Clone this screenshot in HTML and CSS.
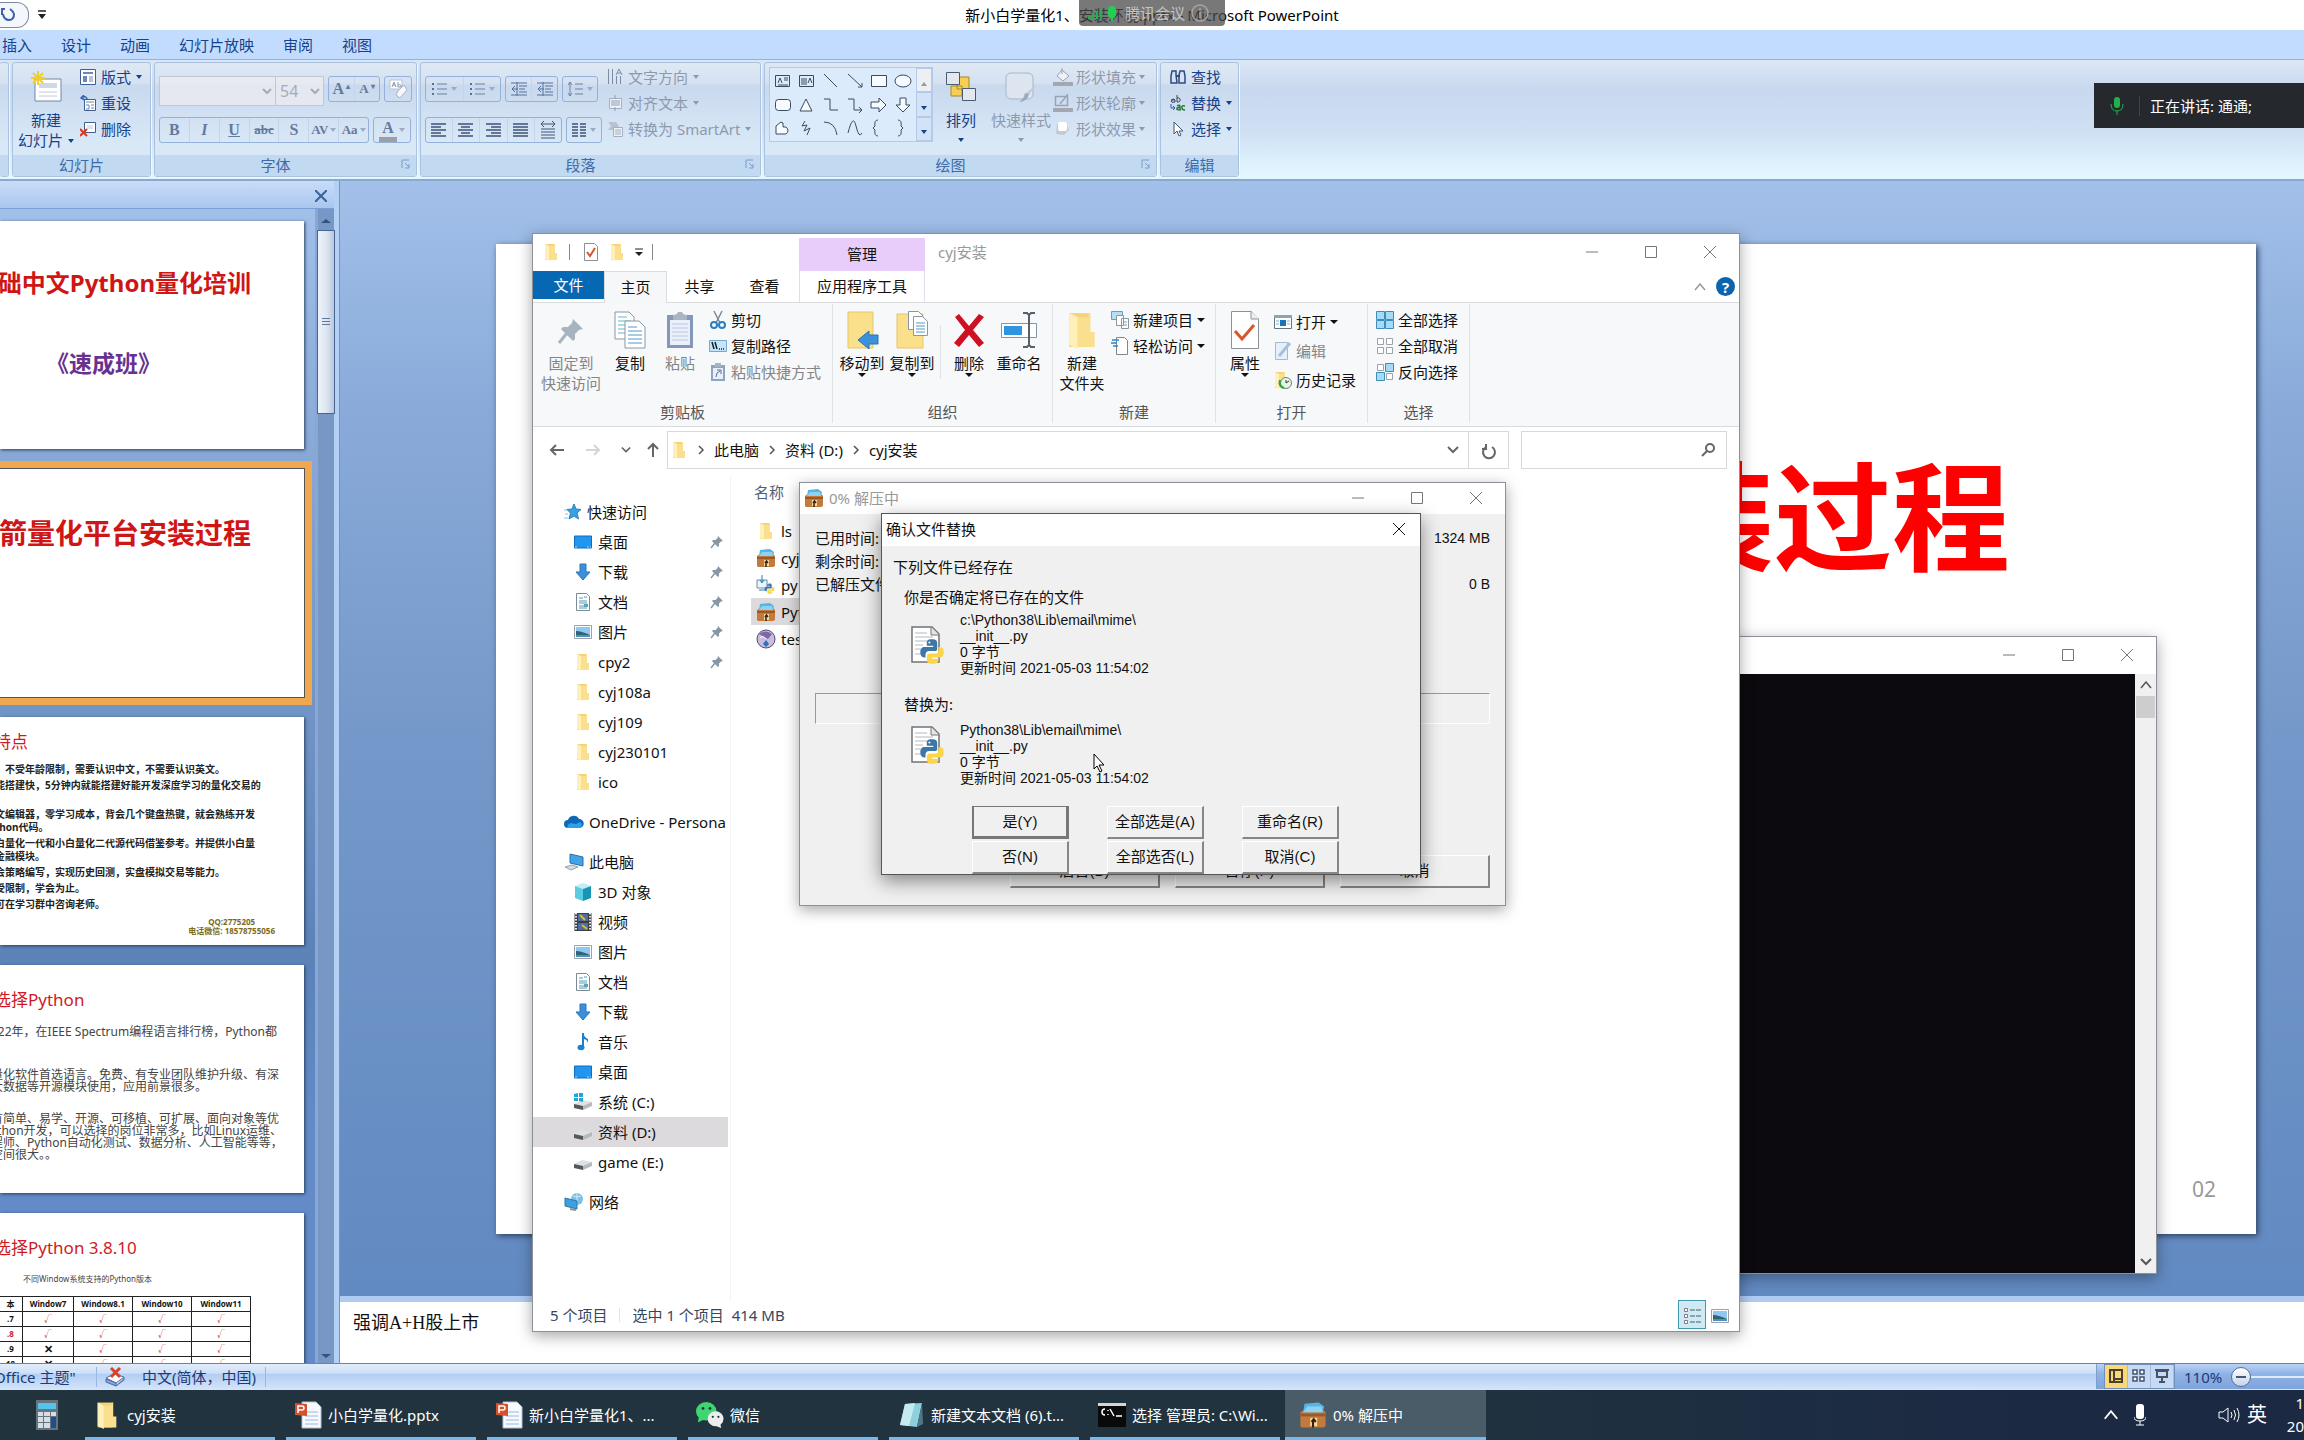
FILE: index.html
```
<!DOCTYPE html>
<html lang="zh-CN">
<head>
    <meta charset="UTF-8">
    <meta name="viewport" content="width=device-width, initial-scale=1.0">
    <title>Microsoft PowerPoint</title>
    <link rel="stylesheet" href="styles.css">
</head>
<body>
    <!-- Icon definitions -->
    <svg class="defs" aria-hidden="true">
        <symbol id="folder" viewBox="0 0 18 18"><path d="M3 1h9.500v16H3z" fill="#f3d37b"/><path d="M3 1l4 2v15l-4-2z" fill="#fff0b8"/><path d="M7 3h5V1h1v9h2v7H7z" fill="#f9df8e"/></symbol>
        <symbol id="archive" viewBox="0 0 20 20"><path d="M1 8l3-2h13l2 2v10l-2 1H2l-1-1z" fill="#c47a3c"/><path d="M1 9h18v2H1z" fill="#9a5a28"/><path d="M4 2l10-1 4 3-1 4H3z" fill="#56b4e6"/><path d="M3 8l3-4h10l1 4z" fill="#8fd1f2"/><path d="M8 12h5v6H8z" fill="#f6d9a0"/><path d="M10 19v-5M9 15l1.500-2 1.500 2" stroke="#3b1f0c" stroke-width="1.500" fill="none"/></symbol>
        <symbol id="python" viewBox="0 0 20 20"><path d="M10 1c-4 0-4 1.500-4 3v2h5v1H4c-2 0-3 2-3 4s1 4 3 4h1v-2c0-2 1-3 3-3h4c2 0 2-1 2-2V4c0-2-1-3-4-3z" fill="#3d76a8"/><path d="M15 7v2c0 2-1 3-3 3H8c-1 0-2 1-2 2v3c0 1.500 1 3 4 3s5-1 5-3v-1h-5v-1h6c2 0 3-1 3-4s-1-4-4-4z" fill="#fbd64a"/><circle cx="8" cy="3.500" r=".8" fill="#fff"/></symbol>
        <symbol id="pyinstall" viewBox="0 0 20 20"><path d="M1 5h10v8H1z" fill="#eaf4fb" stroke="#6f8ea5"/><path d="M6 0v7M4 5l2 3 2-3M3 15h7" stroke="#2c7fb8" fill="none"/><use href="#python" x="8" y="8" width="11" height="11"/></symbol>
        <symbol id="tes" viewBox="0 0 20 20"><circle cx="10" cy="10" r="9" fill="#c8bddf" stroke="#4c4a78"/><path d="M3 5q7-5 13 0l-4 5z" fill="#7c6aa5"/><path d="M10 11l3 4-3 3-3-3z" fill="#3470b8"/><path d="M4 9q3-3 6 1" stroke="#fff" fill="none"/></symbol>
        <symbol id="star" viewBox="0 0 18 18"><path d="M10 1l2 5 5 .5-4 3.500 1.500 6L10 13l-5 3 1.500-6L3 6.500 8 6z" fill="#36a3e0" stroke="#2880be"/><path d="M0 7h3M1 11h3M0 15h4" stroke="#77c4ee"/></symbol>
        <symbol id="desktop" viewBox="0 0 18 18"><path d="M.5 3h17v12H.5z" fill="#2196ee" stroke="#0d6fc0"/><path d="M1 14h16" stroke="#a6dbff" stroke-dasharray="2 10 2 1"/></symbol>
        <symbol id="download" viewBox="0 0 18 18"><path d="M6 1h6v8h4l-7 8-7-8h4z" fill="#3c8fdc" stroke="#2d74b8"/></symbol>
        <symbol id="doc" viewBox="0 0 18 18"><path d="M2.500.5h10l3 3v14h-13z" fill="#fff" stroke="#7b8a94"/><path d="M5 5h4M10 4h3M5 8h8M5 10h8M5 13h5M5 15h8" stroke="#4e9bb5"/><path d="M10 11h4v3h-4z" fill="#5aa4c0"/></symbol>
        <symbol id="picture" viewBox="0 0 18 18"><path d="M.5 2.500h17v13H.5z" fill="#fff" stroke="#9aa2a8"/><path d="M2 4h14v10H2z" fill="#90c8f2"/><path d="M2 8q5 0 14 4v2H2z" fill="#2f6474"/><path d="M2 12h14v2H2z" fill="#4f8fc6"/></symbol>
        <symbol id="onedrive" viewBox="0 0 20 14"><path d="M4 13a4 4 0 010-8 6 6 0 0111-1 4.500 4.500 0 01.5 9z" fill="#0f67b8"/><path d="M3 13q0-3 3-5l6 1 4-2a4 3.500 0 010 6z" fill="#2aa0ea"/></symbol>
        <symbol id="pc" viewBox="0 0 20 18"><path d="M6 1l13 3v9L6 10z" fill="#3fa5e8" stroke="#2f6ea5"/><path d="M1 14l7-2 6 2-7 3z" fill="#d8dbde" stroke="#9ba1a6"/></symbol>
        <symbol id="cube" viewBox="0 0 18 18"><path d="M9 0l8 3-8 3-8-3z" fill="#bdeef6"/><path d="M1 3l8 3v12l-8-3z" fill="#5bcbe0"/><path d="M17 3L9 6v12l8-3z" fill="#1695b5"/></symbol>
        <symbol id="video" viewBox="0 0 18 18"><path d="M.5 0h17v18H.5z" fill="#3b3f44"/><path d="M2 0v18M16 0v18" stroke="#e8e8e8" stroke-width="2" stroke-dasharray="1.500 1.500"/><path d="M4 1h10v7H4zM4 10h10v7H4z" fill="#4a6fa8"/><path d="M6 2l5 5M8 12l5 4" stroke="#e2b63c" stroke-width="2"/></symbol>
        <symbol id="music" viewBox="0 0 18 18"><path d="M9 0v13" stroke="#1d80d0" stroke-width="2"/><path d="M9 0q1 4 5 6v4q-1-4-5-4z" fill="#1d80d0"/><ellipse cx="7" cy="14.500" rx="3.500" ry="2.800" fill="#1d80d0"/></symbol>
        <symbol id="drive" viewBox="0 0 18 18"><path d="M0 11l8-4 10 2-9 5z" fill="#dfe1e3"/><path d="M0 11l9 2v4l-9-2z" fill="#55585b"/><path d="M9 13l9-4v4l-9 4z" fill="#b7babd"/></symbol>
        <symbol id="drivec" viewBox="0 0 18 18"><use href="#drive"/><path d="M0 1l4-1v4H0zM5 0l4-1v5H5zM0 5h4v3H0zM5 5h4v4L5 8z" fill="#21a5d8"/></symbol>
        <symbol id="network" viewBox="0 0 20 18"><circle cx="13" cy="6" r="6" fill="#7cc0e6"/><path d="M9 3q4 2 8 0M13 0v12" stroke="#cfeaf8" fill="none"/><path d="M1 5l12 3v8L1 13z" fill="#3c9fe0" stroke="#2f74aa"/><path d="M6 16l6 1" stroke="#8d9499" stroke-width="2"/></symbol>
        <symbol id="pin" viewBox="0 0 14 14"><path d="M8 1l5 5-2 .5-2 2V11l-1 1-6-6 1-1h2.500l2-2z" fill="#8797a5"/><path d="M5 8l-4 5" stroke="#8797a5" stroke-width="1.500"/></symbol>
        <symbol id="pyfile" viewBox="0 0 34 38"><path d="M1 1h20l7 7v28H1z" fill="#fff" stroke="#707478" stroke-width="1.500"/><path d="M20 1v8h8" fill="#e6e6e6" stroke="#707478"/><path d="M4 7h12M4 11h18M4 15h12M4 19h8M4 23h6M4 28h6" stroke="#b4bac0"/><use href="#python" x="8" y="12" width="26" height="26"/></symbol>
        <symbol id="ppt" viewBox="0 0 28 30"><path d="M8 2h14l5 5v21H8z" fill="#f6f9fd" stroke="#b4bfd0"/><path d="M11 12h13M11 16h13M11 20h13M11 24h13" stroke="#9db8e2"/><path d="M1 3l12 1v12L1 15z" fill="#d6502c"/><path d="M4 13V6h4q2 0 2 2t-2 2H4" stroke="#fff" stroke-width="1.500" fill="none"/></symbol>
        <symbol id="wechat" viewBox="0 0 30 28"><ellipse cx="11" cy="10" rx="11" ry="10" fill="#3fd672"/><path d="M3 16l-1 6 6-3z" fill="#3fd672"/><ellipse cx="21" cy="18" rx="8.500" ry="8" fill="#ededed"/><path d="M26 23l1 5-5-2z" fill="#ededed"/><g fill="#21343e"><circle cx="7.500" cy="7" r="1.500"/><circle cx="15" cy="7" r="1.500"/><circle cx="18" cy="16" r="1.200"/><circle cx="24" cy="16" r="1.200"/></g></symbol>
        <symbol id="notepad" viewBox="0 0 28 28"><path d="M8 3l17-1-5 24-17-2z" fill="#8ed0dc"/><path d="M8 3l10-1-6 23-9-1z" fill="#c5eaf0"/><path d="M25 2l1 21-6 3z" fill="#4f7883"/></symbol>
        <symbol id="terminal" viewBox="0 0 28 24"><path d="M0 0h28v24H0z" fill="#0a0a0a"/><path d="M0 0h28v3H0z" fill="#d5d5d5"/><path d="M7 6q-3 0-3 3t3 3M10 7v1M10 11v1M12 6l4 7M18 13h6" stroke="#fff" stroke-width="1.500" fill="none"/></symbol>
        <symbol id="minimize" viewBox="0 0 12 12"><path d="M0 6h12" stroke="currentColor"/></symbol>
        <symbol id="maximize" viewBox="0 0 12 12"><path d="M.5.5h11v11H.5z" fill="none" stroke="currentColor"/></symbol>
        <symbol id="close" viewBox="0 0 12 12"><path d="M0 0l12 12M12 0L0 12" stroke="currentColor"/></symbol>
        <symbol id="chev-r" viewBox="0 0 8 10"><path d="M2 1l4 4-4 4" fill="none" stroke="#555" stroke-width="1.500"/></symbol>
        <symbol id="chev-d" viewBox="0 0 12 8"><path d="M1 1l5 5 5-5" fill="none" stroke="currentColor" stroke-width="2"/></symbol>
        <symbol id="chev-u" viewBox="0 0 12 8"><path d="M1 7l5-6 5 6" fill="none" stroke="currentColor" stroke-width="1.500"/></symbol>
        <symbol id="bullets" viewBox="0 0 16 16"><path d="M1 2h2v2H1zM1 7h2v2H1zM1 12h2v2H1z" fill="#52719d"/><path d="M6 3h10M6 8h10M6 13h10" stroke="#6d819f"/></symbol>
        <symbol id="al-l" viewBox="0 0 16 14"><path d="M0 1h15M0 4h10M0 7h15M0 10h10M0 13h15" stroke="#3f5377" stroke-width="1.500"/></symbol>
        <symbol id="al-c" viewBox="0 0 16 14"><path d="M0 1h15M3 4h9M0 7h15M3 10h9M0 13h15" stroke="#3f5377" stroke-width="1.500"/></symbol>
        <symbol id="al-r" viewBox="0 0 16 14"><path d="M0 1h15M5 4h10M0 7h15M5 10h10M0 13h15" stroke="#3f5377" stroke-width="1.500"/></symbol>
        <symbol id="al-j" viewBox="0 0 16 14"><path d="M0 1h15M0 4h15M0 7h15M0 10h15M0 13h15" stroke="#3f5377" stroke-width="1.500"/></symbol>
        <symbol id="indent" viewBox="0 0 16 14"><path d="M0 1h16M8 4h8M8 7h6M8 10h8M0 13h16M7 7H1M4 4L1 7l3 3M6 0v14" stroke="#52719d" fill="none"/></symbol>
        <symbol id="launcher" viewBox="0 0 10 10"><path d="M1 9V1h7M4 4l4 4M8 5v4H4" stroke="#7f9cc6" fill="none"/></symbol>
        <symbol id="copypages" viewBox="0 0 32 38"><path d="M1 1h14l5 5v22H1z" fill="#fff" stroke="#8a97a0"/><path d="M4 6h9M4 10h13M4 14h13M4 18h13M4 22h13" stroke="#66b2d6"/><path d="M11 10h14l6 6v21H11z" fill="#fff" stroke="#8a97a0"/><path d="M14 16h9M14 20h14M14 24h14M14 28h14M14 32h14" stroke="#5298c8"/></symbol>
    </svg>

    <div class="app">
        <header class="titlebar">
            <div class="quick-undo"><svg width="14" height="14" viewBox="0 0 14 14"><path d="M4 1H1v6M2 6q1 6 6 6t5-6q-1-3-4-5" fill="none" stroke="#3c5fae" stroke-width="2"/></svg></div>
            <svg width="8" height="10" viewBox="0 0 8 10"><path d="M0 1h8" stroke="#222" stroke-width="1.500"/><path d="M0 4h8L4 9z" fill="#222"/></svg>
            <h1 class="doc-title">新小白学量化1、安装环境.pptx - Microsoft PowerPoint</h1>
        </header>

        <nav class="ppt-tabs">
            <button>插入</button><button>设计</button><button>动画</button><button>幻灯片放映</button><button>审阅</button><button>视图</button>
        </nav>

        <div class="ribbon">
            <section class="group group-cut"><div class="group-body"></div><div class="group-label"></div></section>

            <section class="group group-slides">
                <div class="group-body">
                    <button class="tall">
                        <svg width="32" height="32" viewBox="0 0 32 32"><path d="M5 8h26v22H5z" fill="#fff" stroke="#7386a3"/><path d="M9 12h18v5H9z" fill="#cfd8e6"/><path d="M9 21h18M9 25h18" stroke="#c0c9d8"/><path d="M8 0v14M1 7h14M3 2l10 10M13 2L3 12" stroke="#f0cf2a" stroke-width="2"/></svg>
                        <span>新建</span><span class="line">幻灯片<i class="arrow"></i></span>
                    </button>
                    <div class="stack">
                        <button><svg width="16" height="16" viewBox="0 0 16 16"><path d="M.5.5h15v15H.5z" fill="#fff" stroke="#3f5f93"/><path d="M3 3h10v2H3zM3 7h4v6H3z" fill="#6d88b5"/><path d="M9 8h4M9 10h4M9 12h4" stroke="#6d88b5"/></svg>版式<i class="arrow"></i></button>
                        <button><svg width="16" height="16" viewBox="0 0 16 16"><path d="M4.500 4.500h11v11h-11z" fill="#fff" stroke="#3f5f93"/><path d="M6 7h8M6 10h3v4H6M11 10h3M11 13h3" stroke="#6d88b5" fill="none"/><path d="M7 5Q7 1 3 2M4 0L1 3l4 2" stroke="#2d5cae" stroke-width="1.500" fill="none"/></svg>重设</button>
                        <button><svg width="16" height="16" viewBox="0 0 16 16"><path d="M4.500 1.500h11v10h-11z" fill="#fff" stroke="#3f5f93"/><path d="M7 4h6v4H7z" fill="#dbe3f0"/><path d="M0 8l7 7M7 8l-7 7" stroke="#d83a20" stroke-width="2"/></svg>删除</button>
                    </div>
                </div>
                <div class="group-label">幻灯片</div>
            </section>

            <section class="group group-font">
                <div class="group-body rows">
                    <div class="tool-row">
                        <div class="combo-pair"><select aria-label="字体" disabled><option></option></select><select aria-label="字号" disabled><option>54</option></select></div>
                        <div class="box two"><button class="serif" disabled>A<sup>▴</sup></button><button class="serif small" disabled>A<sup>▾</sup></button></div>
                        <div class="box one"><button disabled aria-label="清除格式"><svg width="18" height="20" viewBox="0 0 18 20"><path d="M1 1h12v9H1z" fill="#fff" stroke="#b9c3d2"/><path d="M3 8l2-5 2 5M4 6h2M9 8V3M9 6q4-1 3 2H9" stroke="#8898b0" fill="none"/><path d="M9 12l6-6 3 5-7 8-4-3z" fill="#f6f8fb" stroke="#a7b1c0"/></svg></button></div>
                    </div>
                    <div class="tool-row">
                        <div class="box seven"><button class="serif" disabled><b>B</b></button><button class="serif" disabled><i>I</i></button><button class="serif" disabled><u>U</u></button><button class="serif small" disabled><s>abc</s></button><button class="serif" disabled><b>S</b></button><button class="serif small" disabled>AV<i class="arrow"></i></button><button class="serif small" disabled>Aa<i class="arrow"></i></button></div>
                        <div class="box color"><button class="serif font-color" disabled><span>A</span><i class="arrow"></i></button></div>
                    </div>
                </div>
                <div class="group-label with-launcher">字体<svg class="launcher" width="10" height="10"><use href="#launcher"/></svg></div>
            </section>

            <section class="group group-para">
                <div class="group-body">
                    <div class="rows">
                        <div class="tool-row">
                            <div class="box p1"><button disabled aria-label="项目符号"><svg width="16" height="16"><use href="#bullets"/></svg><i class="arrow"></i></button><button disabled aria-label="编号"><svg width="16" height="16"><use href="#bullets"/></svg><i class="arrow"></i></button></div>
                            <div class="box p2"><button disabled aria-label="减少缩进"><svg width="16" height="14"><use href="#indent"/></svg></button><button disabled aria-label="增加缩进"><svg width="16" height="14"><use href="#indent"/></svg></button></div>
                            <div class="box p3"><button disabled aria-label="行距"><svg width="16" height="16" viewBox="0 0 16 16"><path d="M3 1v14M1 4l2-3 2 3M1 12l2 3 2-3M8 3h8M8 8h8M8 13h8" stroke="#6d819f" fill="none"/></svg><i class="arrow"></i></button></div>
                        </div>
                        <div class="tool-row">
                            <div class="box p4">
                                <button disabled aria-label="左对齐"><svg width="16" height="14"><use href="#al-l"/></svg></button><button disabled aria-label="居中"><svg width="16" height="14"><use href="#al-c"/></svg></button><button disabled aria-label="右对齐"><svg width="16" height="14"><use href="#al-r"/></svg></button><button disabled aria-label="两端对齐"><svg width="16" height="14"><use href="#al-j"/></svg></button><button disabled aria-label="分散对齐"><svg width="16" height="18" viewBox="0 0 16 18"><path d="M1 3h14M4 0L1 3l3 3M12 0l3 3-3 3M1 8h14M1 11h14M1 14h14M1 17h14" stroke="#3f5377" fill="none"/></svg></button>
                            </div>
                            <div class="box p3"><button disabled aria-label="分栏"><svg width="14" height="14" viewBox="0 0 14 14"><path d="M0 1h6M0 4h6M0 7h6M0 10h6M0 13h6M8 1h6M8 4h6M8 7h6M8 10h6M8 13h6" stroke="#3f5377" stroke-width="1.500"/></svg><i class="arrow"></i></button></div>
                        </div>
                    </div>
                    <div class="stack off">
                        <button disabled><svg width="16" height="16" viewBox="0 0 16 16"><path d="M1.500 0v15M5.500 0v15M9.500 7v8M13.500 7v8M9 6l3-6 3 6M10 4h4" stroke="#7d8ca5" fill="none"/></svg>文字方向<i class="arrow"></i></button>
                        <button disabled><svg width="16" height="16" viewBox="0 0 16 16"><path d="M2.500 3.500h12v10h-12z" fill="#eef2f8" stroke="#a3afc2"/><path d="M4 6h9M4 8h9M4 10h9M8 0v4M8 12v4" stroke="#8f9db3"/></svg>对齐文本<i class="arrow"></i></button>
                        <button disabled><svg width="16" height="16" viewBox="0 0 16 16"><path d="M1 1h8l3 4-3 4H1l3-4z" fill="#b9c1cd"/><path d="M6.500 6.500h9v9h-9z" fill="#eef2f8" stroke="#a3afc2"/><path d="M8 9h6M8 11h6M8 13h6" stroke="#a3afc2"/></svg>转换为 SmartArt<i class="arrow"></i></button>
                    </div>
                </div>
                <div class="group-label with-launcher">段落<svg class="launcher" width="10" height="10"><use href="#launcher"/></svg></div>
            </section>

            <section class="group group-draw">
                <div class="group-body">
                    <div class="gallery">
                        <svg class="shapes" viewBox="0 0 146 74" width="146" height="74" fill="none" stroke="#3c4a60">
                            <path d="M5.500 7.500h14v11h-14zM8 15l2-5 2 5M14 10h4M14 12h4M8 17h10M29.500 7.500h14v11h-14zM32 10v7M34 10v7M36 10v7M38 15l2-5 2 5" fill="none"/>
                            <path d="M54 6l13 13M78 6l14 13M92 15v4h-4" />
                            <path d="M101.500 7.500h15v11h-15z" fill="#f6fbff"/><ellipse cx="133" cy="13" rx="8" ry="6" fill="#f6fbff"/>
                            <rect x="5.500" y="31.500" width="15" height="11" rx="3" fill="#f6fbff"/><path d="M30 43l6-12 6 12z" fill="#f6fbff"/>
                            <path d="M54 31h6v11h8M78 31h6v11h8M89 39l3 3-3 3"/>
                            <path d="M101 34h8v-4l7 7-7 7v-4h-8zM130 30v7h-4l7 7 7-7h-4v-7z" fill="#f6fbff"/>
                            <path d="M6 66v-8l5-4 2 1v4h3q4 4 0 7z" fill="#f6fbff"/><path d="M35 53l-3 5 5-1-3 6 6-3-3 7M54 54q11 0 13 13M78 65q5-20 8-7t6 7M108 52q-4 0-3 6l-2 2 2 2q-1 6 3 6M128 52q4 0 3 6l2 2-2 2q1 6-3 6"/>
                        </svg>
                        <div class="gallery-scroll"><button disabled aria-label="上"><i class="arrow up"></i></button><button aria-label="下"><i class="arrow"></i></button><button aria-label="更多"><i class="arrow more"></i></button></div>
                    </div>
                    <button class="tall"><svg width="32" height="32" viewBox="0 0 32 32"><path d="M12 6h12v12H12zM6 15h11v10H6z" fill="#f7cf55" stroke="#a8862f"/><path d="M1.500 1.500h13v12h-13zM17.500 17.500h13v12h-13z" fill="#e3e8ef" stroke="#4a5a72"/></svg><span>排列</span><i class="arrow"></i></button>
                    <button class="tall quick-style" disabled><svg width="32" height="32" viewBox="0 0 32 32"><rect x="1" y="2" width="27" height="26" rx="5" fill="#dde5f0" stroke="#a9b6c9"/><path d="M31 14l-7 10-3-2z" fill="#c5cbd6"/><path d="M24 23q-1 7-10 8 5-3 6-9z" fill="#9ea8b8"/></svg><span>快速样式</span><i class="arrow"></i></button>
                    <div class="stack off tight">
                        <button disabled><svg width="20" height="18" viewBox="0 0 20 18"><path d="M9 2l7 6-6 5-6-5zM9 0v6" fill="#eef2f8" stroke="#98a3b5"/><path d="M0 14h20v4H0z" fill="#a3a8b0"/></svg>形状填充<i class="arrow"></i></button>
                        <button disabled><svg width="20" height="18" viewBox="0 0 20 18"><path d="M2.500 2.500h12v9h-12zM15 0L7 10" fill="none" stroke="#98a3b5" stroke-width="1.500"/><path d="M0 14h20v4H0z" fill="#a3a8b0"/></svg>形状轮廓<i class="arrow"></i></button>
                        <button disabled><svg width="20" height="18" viewBox="0 0 20 18"><path d="M4 4l9-2 3 8-5 5-8-1z" fill="#c3cad6"/><rect x="5" y="2" width="9" height="9" rx="2" fill="#fff"/></svg>形状效果<i class="arrow"></i></button>
                    </div>
                </div>
                <div class="group-label with-launcher">绘图<svg class="launcher" width="10" height="10"><use href="#launcher"/></svg></div>
            </section>

            <section class="group group-edit">
                <div class="group-body">
                    <div class="stack">
                        <button><svg width="16" height="14" viewBox="0 0 16 14"><path d="M2 1h4v4l1 8H1V6zM10 1h4l1 5v7H9V5z" fill="#d6e3f5" stroke="#2c4a82" stroke-width="1.500"/><path d="M6 6h4" stroke="#2c4a82" stroke-width="2"/></svg>查找</button>
                        <button><svg width="16" height="16" viewBox="0 0 16 16"><path d="M1 5q3-2 4 0v2q-4 1-4-1 2-2 4-1M7 0v7q4 0 3-3-1-2-3-1" stroke="#3d4450" fill="none"/><path d="M1 9v4h4M3 11l2 2-2 2" stroke="#2d5cae" fill="none"/><path d="M7 11q3-2 3 1v3q-4 0-3-2l3-1M15 11q-4-1-3 2 0 2 3 2" stroke="#237a2c" stroke-width="1.500" fill="none"/></svg>替换<i class="arrow"></i></button>
                        <button><svg width="16" height="16" viewBox="0 0 16 16"><path d="M4 1v12l3-3 2 5 2-1-2-4h4z" fill="#fff" stroke="#47566e"/></svg>选择<i class="arrow"></i></button>
                    </div>
                </div>
                <div class="group-label">编辑</div>
            </section>
        </div>

        <main class="workspace">
            <aside class="slides-panel">
                <div class="panel-head"><button aria-label="关闭"><svg width="12" height="12"><use href="#close"/></svg></button></div>
                <div class="panel-body">
                    <div class="thumbs">
                        <article class="thumb cover">
                            <h2>础中文Python量化培训</h2>
                            <h3>《速成班》</h3>
                        </article>
                        <article class="thumb cover selected">
                            <h2 class="large">箭量化平台安装过程</h2>
                        </article>
                        <article class="thumb text kai">
                            <h2>特点</h2>
                            <p>，不受年龄限制，需要认识中文，不需要认识英文。</p>
                            <p>能搭建快，5分钟内就能搭建好能开发深度学习的量化交易的</p>
                            <p class="gap">文编辑器，零学习成本，背会几个键盘热键，就会熟练开发<br>thon代码。</p>
                            <p>白量化一代和小白量化二代源代码借鉴参考。并提供小白量<br>金融模块。</p>
                            <p>会策略编写，实现历史回测，实盘模拟交易等能力。</p>
                            <p>受限制，学会为止。</p>
                            <p>可在学习群中咨询老师。</p>
                            <address>QQ:2775205<br>电话微信: 18578755056</address>
                        </article>
                        <article class="thumb text plain">
                            <h2>选择Python</h2>
                            <p>022年，在IEEE Spectrum编程语言排行榜，Python都</p>
                            <p class="far">量化软件首选语言。免费、有专业团队维护升级、有深<br>大数据等开源模块使用，应用前景很多。</p>
                            <p>有简单、易学、开源、可移植、可扩展、面向对象等优<br>ython开发，可以选择的岗位非常多，比如Linux运维、<br>程师、Python自动化测试、数据分析、人工智能等等，<br>空间很大。。</p>
                        </article>
                        <article class="thumb text versions">
                            <h2>选择Python 3.8.10</h2>
                            <table>
                                <caption>不同Window系统支持的Python版本</caption>
                                <tr><th>本</th><th>Window7</th><th>Window8.1</th><th>Window10</th><th>Window11</th></tr>
                                <tr><th>.7</th><td>√</td><td>√</td><td>√</td><td>√</td></tr>
                                <tr><th class="hot">.8</th><td>√</td><td>√</td><td>√</td><td>√</td></tr>
                                <tr><th>.9</th><td class="no">✕</td><td>√</td><td>√</td><td>√</td></tr>
                                <tr><th>10</th><td class="no">✕</td><td>√</td><td>√</td><td>√</td></tr>
                            </table>
                        </article>
                    </div>
                    <div class="office-scroll"><i class="arrow up"></i><div class="office-thumb"></div><i class="arrow"></i></div>
                </div>
            </aside>
            <div class="editor">
                <div class="canvas">
                    <div class="slide"><h2>装过程</h2><span class="page-no">02</span></div>
                </div>
                <div class="notes">强调A+H股上市</div>
            </div>
        </main>

        <footer class="statusbar">
            <span class="theme">Office 主题"</span>
            <svg width="20" height="20" viewBox="0 0 20 20"><path d="M1 11l8-4 10 3-8 6z" fill="#fff" stroke="#5371a8"/><path d="M1 12v3l10 4v-3zM11 19l8-6v-3" fill="#8ba8d8" stroke="#4a68a3"/><path d="M6 1l9 9M15 1L6 10" stroke="#d8432a" stroke-width="3"/></svg>
            <span class="lang">中文(简体，中国)</span>
            <div class="zoom-area">
                <div class="views">
                    <button class="on" aria-label="普通视图"><svg width="14" height="14" viewBox="0 0 14 14"><path d="M1 1h12v12H1zM5 1v12M5 10h8" fill="none" stroke="#4a4030" stroke-width="2"/></svg></button>
                    <button aria-label="幻灯片浏览"><svg width="14" height="14" viewBox="0 0 14 14"><path d="M1 1h4v4H1zM8 1h4v4H8zM1 8h4v4H1zM8 8h4v4H8z" fill="#fff" stroke="#44536c" stroke-width="1.500"/></svg></button>
                    <button aria-label="幻灯片放映"><svg width="14" height="14" viewBox="0 0 14 14"><path d="M0 1h14M2 2h10v6H2zM7 8v4M4 13h6" fill="none" stroke="#44536c" stroke-width="2"/></svg></button>
                </div>
                <span>110%</span>
                <button class="zoom-out" aria-label="缩小"></button>
                <i class="zoom-line"></i>
            </div>
        </footer>
    </div>

    <!-- Console -->
    <section class="window console">
        <div class="win-title"><div class="win-buttons"><button aria-label="最小化"><svg width="12" height="12"><use href="#minimize"/></svg></button><button aria-label="最大化"><svg width="12" height="12"><use href="#maximize"/></svg></button><button aria-label="关闭"><svg width="12" height="12"><use href="#close"/></svg></button></div></div>
        <div class="console-body"><div class="console-screen"></div><div class="console-scroll"><svg width="12" height="8"><use href="#chev-u"/></svg><i></i><svg width="12" height="8"><use href="#chev-d"/></svg></div></div>
    </section>

    <!-- File explorer -->
    <section class="window explorer">
        <div class="win-title">
            <div class="quick">
                <svg width="18" height="18"><use href="#folder"/></svg><i class="bar"></i>
                <svg width="16" height="18" viewBox="0 0 16 18"><path d="M1.500.5h10l3 3v14h-13z" fill="#fff" stroke="#8a9299"/><path d="M4 9l3 4 5-8" fill="none" stroke="#d3592c" stroke-width="2"/></svg>
                <svg width="18" height="18"><use href="#folder"/></svg>
                <svg width="8" height="8" viewBox="0 0 8 8"><path d="M0 1h8" stroke="#222"/><path d="M0 4h8L4 8z" fill="#222"/></svg><i class="bar"></i>
            </div>
            <div class="context">管理</div>
            <span class="caption">cyj安装</span>
            <div class="win-buttons"><button aria-label="最小化"><svg width="12" height="12"><use href="#minimize"/></svg></button><button aria-label="最大化"><svg width="12" height="12"><use href="#maximize"/></svg></button><button aria-label="关闭"><svg width="12" height="12"><use href="#close"/></svg></button></div>
        </div>
        <nav class="ex-tabs">
            <div class="main-tabs"><button class="file">文件</button><button class="home">主页</button><button>共享</button><button>查看</button></div>
            <button class="tools">应用程序工具</button>
            <div class="tab-right"><svg width="12" height="8"><use href="#chev-u"/></svg><button class="help">?</button></div>
        </nav>
        <div class="ex-ribbon">
            <section class="ex-group clip">
                <div class="ex-tools">
                    <button class="big wide" disabled><svg width="28" height="38" viewBox="0 0 14 19"><use href="#pin" y="3" width="14" height="14" opacity=".7"/></svg>固定到<br>快速访问</button>
                    <button class="big"><svg width="32" height="38"><use href="#copypages"/></svg>复制</button>
                    <button class="big" disabled><svg width="28" height="38" viewBox="0 0 28 38"><path d="M1 4h26v33H1z" fill="#8698ba"/><path d="M4 9h20v25H4z" fill="#eaf0fa"/><path d="M6 13h16M6 17h16M6 21h16M6 25h16M6 29h16" stroke="#b9c8e2"/><path d="M7 4q4 0 5-3h4q1 3 5 3v5H7z" fill="#a9b4c4"/></svg>粘贴</button>
                    <div class="small-list">
                        <button><svg width="18" height="20" viewBox="0 0 18 20"><path d="M5 1l6 12M13 1L7 13" stroke="#7d8b96" stroke-width="1.500"/><circle cx="5" cy="15" r="3" fill="none" stroke="#2b7fc0" stroke-width="2"/><circle cx="13" cy="15" r="3" fill="none" stroke="#2b7fc0" stroke-width="2"/></svg>剪切</button>
                        <button><svg width="18" height="14" viewBox="0 0 18 14"><path d="M.5 1.500h17v11H.5z" fill="#c5e5fa" stroke="#74a9cd"/><path d="M3 3l2 7M6 3l2 7M10 10h1M12 10h1M14 10h1" stroke="#16202a" stroke-width="1.500"/></svg>复制路径</button>
                        <button disabled><svg width="18" height="20" viewBox="0 0 18 20"><path d="M2 3h14v16H2z" fill="#8fa3c4"/><path d="M4 6h10v11H4z" fill="#e8eff9"/><path d="M6 1h6v4H6z" fill="#a9b4c4"/><path d="M7 15q0-5 4-6M8 8h4v4" stroke="#56719c" fill="none"/></svg>粘贴快捷方式</button>
                    </div>
                </div>
                <div class="ex-label">剪贴板</div>
            </section>
            <section class="ex-group org">
                <div class="ex-tools">
                    <button class="big"><svg width="34" height="38" viewBox="0 0 34 38"><path d="M3 1h25v36H3z" fill="#fbe08c" stroke="#e6c667"/><path d="M33 24v9h-9v5L13 29l11-9v4z" fill="#3c92da" stroke="#2674b5"/></svg>移动到<i class="arrow"></i></button>
                    <button class="big"><svg width="34" height="38" viewBox="0 0 34 38"><path d="M2 3h26v34H2z" fill="#fbe08c" stroke="#e6c667"/><path d="M13.500.5h10l4 4v14h-14z" fill="#fff" stroke="#8a97a0"/><path d="M18.500 5.500h9l5 5v14h-14z" fill="#fff" stroke="#8a97a0"/><path d="M21 12h9M21 15h9M21 18h9M21 21h9" stroke="#5298c8"/></svg>复制到<i class="arrow"></i></button>
                    <i class="split"></i>
                    <button class="big"><svg width="32" height="38" viewBox="0 0 32 38"><path d="M2 6l4-3 10 12L26 3l5 3-11 13 11 13-5 4-10-12L6 36l-5-4 11-13z" fill="#cf1022"/></svg>删除<i class="arrow"></i></button>
                    <button class="big"><svg width="36" height="38" viewBox="0 0 36 38"><path d="M.5 12.500h35v14H.5z" fill="#fff" stroke="#7f96a8"/><path d="M3 15h18v9H3z" fill="#2e96e0"/><path d="M22 2h4l2 2 2-2h4M28 4v30M22 36h4l2-2 2 2h4" fill="none" stroke="#54616c" stroke-width="2"/></svg>重命名</button>
                </div>
                <div class="ex-label">组织</div>
            </section>
            <section class="ex-group new">
                <div class="ex-tools">
                    <button class="big"><svg width="38" height="38"><use href="#folder"/></svg>新建<br>文件夹</button>
                    <div class="small-list">
                        <button><svg width="18" height="18" viewBox="0 0 18 18"><path d="M.5.5h11v8H.5z" fill="#b9ddf5" stroke="#6b9cbf"/><path d="M5.500 4.500h7v10h-7zM10.500 7.500h7v10h-7z" fill="#fff" stroke="#8a97a0"/><path d="M12 11h4M12 14h4" stroke="#8a97a0"/></svg>新建项目<i class="arrow"></i></button>
                        <button><svg width="18" height="18" viewBox="0 0 18 18"><path d="M5.500.5h8l3 3v14h-11z" fill="#fff" stroke="#7b8790"/><path d="M1 3h7M0 6h6M2 9h5" stroke="#2688d0" stroke-width="1.500"/></svg>轻松访问<i class="arrow"></i></button>
                    </div>
                </div>
                <div class="ex-label">新建</div>
            </section>
            <section class="ex-group open">
                <div class="ex-tools">
                    <button class="big"><svg width="28" height="38" viewBox="0 0 28 38"><path d="M.5.500h20l7 8v29H.5z" fill="#fff" stroke="#8a9299"/><path d="M20 0v8h8" fill="#eee" stroke="#8a9299"/><path d="M4 20l7 8 12-14" fill="none" stroke="#d3592c" stroke-width="3"/></svg>属性<i class="arrow"></i></button>
                    <div class="small-list roomy">
                        <button><svg width="18" height="16" viewBox="0 0 18 16"><path d="M.5 1.500h17v13H.5z" fill="#fff" stroke="#66757f"/><path d="M0 1h18v3H0z" fill="#8fa3b1"/><path d="M6 6h6v6H6z" fill="#1874ba"/><path d="M2 7h3M2 10h3M13 7h3M13 10h3" stroke="#6db3e0"/></svg>打开<i class="arrow"></i></button>
                        <button disabled><svg width="18" height="18" viewBox="0 0 18 18"><path d="M1.500.5h12v17h-12z" fill="#e6f0fb" stroke="#a9b9cc"/><path d="M16 1L5 14" stroke="#a6c0de" stroke-width="3"/></svg>编辑</button>
                        <button><svg width="18" height="18" viewBox="0 0 18 18"><use href="#folder" x="-2"/><circle cx="12" cy="12" r="5.500" fill="#e6f4e4" stroke="#66846a"/><path d="M12 9v3l3-2" stroke="#333" fill="none"/><path d="M6 9q-2 6 4 8" stroke="#2ea336" stroke-width="2" fill="none"/></svg>历史记录</button>
                    </div>
                </div>
                <div class="ex-label">打开</div>
            </section>
            <section class="ex-group pick">
                <div class="ex-tools">
                    <div class="small-list">
                        <button><svg width="18" height="18" viewBox="0 0 18 18"><path d="M.5.5h8v8h-8zM9.500.5h8v8h-8zM.5 9.500h8v8h-8zM9.500 9.500h8v8h-8z" fill="#a5dbf8" stroke="#3f8db8"/></svg>全部选择</button>
                        <button><svg width="18" height="18" viewBox="0 0 18 18"><path d="M1.500 1.500h6v6h-6zM10.500 1.500h6v6h-6zM1.500 10.500h6v6h-6zM10.500 10.500h6v6h-6z" fill="#fff" stroke="#9aa3ab"/></svg>全部取消</button>
                        <button><svg width="18" height="18" viewBox="0 0 18 18"><path d="M1.500 1.500h6v6h-6zM10.500 10.500h6v6h-6z" fill="#fff" stroke="#9aa3ab"/><path d="M9.500.5h8v8h-8zM.5 9.500h8v8h-8z" fill="#a5dbf8" stroke="#3f8db8"/></svg>反向选择</button>
                    </div>
                </div>
                <div class="ex-label">选择</div>
            </section>
        </div>

        <div class="address-row">
            <div class="history">
                <svg width="16" height="14" viewBox="0 0 16 14"><path d="M15 7H2M7 2L2 7l5 5" fill="none" stroke="#666" stroke-width="2"/></svg>
                <svg width="16" height="14" viewBox="0 0 16 14"><path d="M1 7h13M9 2l5 5-5 5" fill="none" stroke="#d5d5d5" stroke-width="2"/></svg>
                <svg width="10" height="8" viewBox="0 0 12 8"><use href="#chev-d"/></svg>
                <svg width="12" height="16" viewBox="0 0 12 16"><path d="M6 15V2M1 7l5-5 5 5" fill="none" stroke="#666" stroke-width="2"/></svg>
            </div>
            <div class="address">
                <svg width="18" height="18"><use href="#folder"/></svg>
                <svg width="8" height="10"><use href="#chev-r"/></svg><a href="#">此电脑</a>
                <svg width="8" height="10"><use href="#chev-r"/></svg><a href="#">资料 (D:)</a>
                <svg width="8" height="10"><use href="#chev-r"/></svg><a href="#">cyj安装</a>
                <svg class="drop" width="12" height="8"><use href="#chev-d"/></svg>
                <button class="refresh" aria-label="刷新"><svg width="16" height="16" viewBox="0 0 16 16"><path d="M11 3a6 6 0 11-6 0M5 0v5H1" fill="none" stroke="#666" stroke-width="2"/></svg></button>
            </div>
            <div class="search"><input type="text" aria-label="搜索"><svg width="14" height="14" viewBox="0 0 14 14"><circle cx="9" cy="5" r="4" fill="none" stroke="#666" stroke-width="2"/><path d="M6 8l-5 5" stroke="#666" stroke-width="2"/></svg></div>
        </div>

        <div class="ex-main">
            <nav class="tree">
                <a class="top"><svg width="18" height="18"><use href="#star"/></svg>快速访问</a>
                <a><svg width="18" height="18"><use href="#desktop"/></svg>桌面<svg class="pin" width="14" height="14"><use href="#pin"/></svg></a>
                <a><svg width="18" height="18"><use href="#download"/></svg>下载<svg class="pin" width="14" height="14"><use href="#pin"/></svg></a>
                <a><svg width="18" height="18"><use href="#doc"/></svg>文档<svg class="pin" width="14" height="14"><use href="#pin"/></svg></a>
                <a><svg width="18" height="18"><use href="#picture"/></svg>图片<svg class="pin" width="14" height="14"><use href="#pin"/></svg></a>
                <a><svg width="18" height="18"><use href="#folder"/></svg>cpy2<svg class="pin" width="14" height="14"><use href="#pin"/></svg></a>
                <a><svg width="18" height="18"><use href="#folder"/></svg>cyj108a</a>
                <a><svg width="18" height="18"><use href="#folder"/></svg>cyj109</a>
                <a><svg width="18" height="18"><use href="#folder"/></svg>cyj230101</a>
                <a><svg width="18" height="18"><use href="#folder"/></svg>ico</a>
                <a class="top"><svg width="20" height="14"><use href="#onedrive"/></svg>OneDrive - Persona</a>
                <a class="top"><svg width="20" height="18"><use href="#pc"/></svg>此电脑</a>
                <a><svg width="18" height="18"><use href="#cube"/></svg>3D 对象</a>
                <a><svg width="18" height="18"><use href="#video"/></svg>视频</a>
                <a><svg width="18" height="18"><use href="#picture"/></svg>图片</a>
                <a><svg width="18" height="18"><use href="#doc"/></svg>文档</a>
                <a><svg width="18" height="18"><use href="#download"/></svg>下载</a>
                <a><svg width="18" height="18"><use href="#music"/></svg>音乐</a>
                <a><svg width="18" height="18"><use href="#desktop"/></svg>桌面</a>
                <a><svg width="18" height="18"><use href="#drivec"/></svg>系统 (C:)</a>
                <a class="active"><svg width="18" height="18"><use href="#drive"/></svg>资料 (D:)</a>
                <a><svg width="18" height="18"><use href="#drive"/></svg>game (E:)</a>
                <a class="top"><svg width="20" height="18"><use href="#network"/></svg>网络</a>
            </nav>
            <div class="files">
                <div class="files-head">名称</div>
                <ul>
                    <li><svg width="20" height="18"><use href="#folder"/></svg>ls</li>
                    <li><svg width="20" height="20"><use href="#archive"/></svg>cyj</li>
                    <li><svg width="20" height="20"><use href="#pyinstall"/></svg>py</li>
                    <li class="active"><svg width="20" height="20"><use href="#archive"/></svg>Pyt</li>
                    <li><svg width="20" height="20"><use href="#tes"/></svg>tes</li>
                </ul>
            </div>
        </div>
        <footer class="ex-status">
            <span>5 个项目</span><i></i><span>选中 1 个项目&nbsp; 414 MB</span>
            <div class="view-switch">
                <button class="on" aria-label="详细信息"><svg width="18" height="18" viewBox="0 0 18 18"><path d="M1.500 1.500h3v3h-3zM1.500 7.500h3v3h-3zM1.500 13.500h3v3h-3z" fill="#fff" stroke="#8a7480"/><path d="M7 3h11M7 9h11M7 15h11" stroke="#4c5a66" stroke-dasharray="5 1"/></svg></button>
                <button aria-label="大图标"><svg width="18" height="18"><use href="#picture"/></svg></button>
            </div>
        </footer>
    </section>

    <!-- Unzip progress -->
    <section class="window unzip">
        <div class="win-title"><svg width="20" height="20"><use href="#archive"/></svg><span class="caption">0% 解压中</span>
            <div class="win-buttons"><button aria-label="最小化"><svg width="12" height="12"><use href="#minimize"/></svg></button><button aria-label="最大化"><svg width="12" height="12"><use href="#maximize"/></svg></button><button aria-label="关闭"><svg width="12" height="12"><use href="#close"/></svg></button></div>
        </div>
        <div class="unzip-body">
            <dl><dt>已用时间:</dt><dd>1324 MB</dd><dt>剩余时间:</dt><dd></dd><dt>已解压文件</dt><dd>0 B</dd></dl>
            <div class="progress"></div>
            <div class="actions"><button>后台(B)</button><button>暂停(P)</button><button>取消</button></div>
        </div>
    </section>

    <!-- Replace confirmation -->
    <section class="window confirm">
        <div class="win-title"><span>确认文件替换</span><div class="win-buttons"><button aria-label="关闭"><svg width="12" height="12"><use href="#close"/></svg></button></div></div>
        <div class="confirm-body">
            <p>下列文件已经存在</p>
            <p class="ask">你是否确定将已存在的文件</p>
            <div class="file-info"><svg width="34" height="38"><use href="#pyfile"/></svg><div>c:\Python38\Lib\email\mime\<br>__init__.py<br>0 字节<br>更新时间 2021-05-03 11:54:02</div></div>
            <p class="with">替换为:</p>
            <div class="file-info second"><svg width="34" height="38"><use href="#pyfile"/></svg><div>Python38\Lib\email\mime\<br>__init__.py<br>0 字节<br>更新时间 2021-05-03 11:54:02</div></div>
            <div class="choices"><button class="default">是(Y)</button><button>全部选是(A)</button><button>重命名(R)</button><button>否(N)</button><button>全部选否(L)</button><button>取消(C)</button></div>
        </div>
    </section>
    <svg class="cursor" width="13" height="20" viewBox="0 0 13 20"><path d="M1 1v15l3-3 3 6 2-1-3-6h5z" fill="#fff" stroke="#000"/></svg>

    <!-- Meeting overlays -->
    <div class="meeting-pill"><svg width="32" height="16" viewBox="0 0 32 16"><path d="M2 10v4M6 8v6M10 6v8M14 4v10" stroke="#20b34c" stroke-width="2"/><rect x="21" y="1" width="8" height="12" rx="4" fill="#22cf55"/><path d="M25 13v3" stroke="#22cf55" stroke-width="2"/></svg>腾讯会议<svg width="18" height="18" viewBox="0 0 18 18"><circle cx="9" cy="9" r="8" fill="none" stroke="#a5a5a5" stroke-width="1.500"/><path d="M9 4v2M9 8v6" stroke="#a5a5a5" stroke-width="1.500"/></svg></div>
    <div class="speaking"><svg width="14" height="20" viewBox="0 0 14 20"><rect x="4" y="1" width="6" height="11" rx="3" fill="#21b14c"/><path d="M1 8q0 7 6 7t6-7M7 15v4" stroke="#21b14c" fill="none"/></svg><i></i>正在讲话: 通通;</div>

    <!-- Taskbar -->
    <footer class="taskbar">
        <svg class="calc" width="22" height="30" viewBox="0 0 22 30"><path d="M0 0h22v30H0z" fill="#68737e"/><path d="M2 3h18v6H2z" fill="#51c5ee"/><path d="M2 12h5v4H2zM8 12h6v4H8zM15 12h5v4h-5zM2 17h5v5H2zM8 17h6v5H8zM2 23h5v5H2zM8 23h6v5H8z" fill="#d5dde5"/><path d="M15 17h5v11h-5z" fill="#1b508f"/></svg>
        <button class="task"><svg width="28" height="28" viewBox="0 0 18 18"><use href="#folder"/></svg>cyj安装</button>
        <button class="task"><svg width="28" height="30"><use href="#ppt"/></svg>小白学量化.pptx</button>
        <button class="task"><svg width="28" height="30"><use href="#ppt"/></svg>新小白学量化1、...</button>
        <button class="task"><svg width="28" height="28"><use href="#wechat"/></svg>微信</button>
        <button class="task"><svg width="28" height="28"><use href="#notepad"/></svg>新建文本文档 (6).t...</button>
        <button class="task"><svg width="28" height="24"><use href="#terminal"/></svg>选择 管理员: C:\Wi...</button>
        <button class="task active"><svg width="28" height="28"><use href="#archive"/></svg>0% 解压中</button>
        <div class="tray">
            <svg width="16" height="10" viewBox="0 0 12 8"><use href="#chev-u"/></svg>
            <svg class="mic" width="12" height="22" viewBox="0 0 12 22"><rect x="2" y="0" width="8" height="15" rx="3" fill="#fff"/><path d="M0 13q0 4 6 4t6-4M6 17v4M2 21h8" stroke="#fff" fill="none"/></svg>
            <svg class="volume" width="22" height="18" viewBox="0 0 22 18"><path d="M1 6h4l5-4v14l-5-4H1zM13 6q2 3 0 6M16 4q3 5 0 10M19 2q4 7 0 14" stroke="#fff" fill="none"/></svg>
            <span class="ime">英</span>
            <div class="clock">1<br>20</div>
        </div>
    </footer>
</body>
</html>
```

FILE: styles.css
```
* {
    margin: 0;
    padding: 0;
    box-sizing: border-box;
}

body {
    position: relative;
    height: 100vh;
    overflow: hidden;
    display: flex;
    flex-direction: column;
    font-family: "Noto Sans", "Noto Sans CJK SC", sans-serif;
    font-size: 15px;
    line-height: 20px;
    color: #111;
}

button,
input,
select {
    font: inherit;
    color: inherit;
    border: none;
    background: none;
}

svg {
    flex: none;
}

h1,
h2,
h3 {
    font-weight: 400;
}

.defs {
    position: absolute;
    width: 0;
    height: 0;
}

.arrow {
    flex: none;
    display: inline-block;
    border: 3px solid transparent;
    border-top: 4px solid currentColor;
    border-bottom: none;
}

.arrow.up {
    border-top: none;
    border-bottom: 4px solid currentColor;
}

/* PowerPoint */
.app {
    flex: 1;
    min-height: 0;
    display: flex;
    flex-direction: column;
}

.titlebar {
    height: 30px;
    display: flex;
    align-items: center;
    gap: 9px;
    padding-right: 55px;
    background: #fff;
}

.quick-undo {
    width: 29px;
    height: 26px;
    padding: 5px 1px;
    border: 1px solid #7f8ba0;
    border-left: none;
    border-radius: 0 12px 12px 0;
    background: #f4f7fb;
    line-height: 14px;
}

.doc-title {
    flex: 1;
    text-align: center;
    font-size: 15px;
    color: #000;
}

.ppt-tabs {
    height: 30px;
    display: flex;
    gap: 29px;
    padding-left: 2px;
    background: #c2dcff;
    border-bottom: 1px solid #8fb3e2;
    color: #15428b;
}

.ribbon {
    height: 121px;
    display: flex;
    gap: 3px;
    padding: 2px 0 2px;
    background: linear-gradient(#dce7f5, #c8d8ee 25%, #cfe0f4 60%, #e2f6ff 95%);
    border-bottom: 2px solid #8aa9cf;
    color: #15428b;
}

.group {
    display: flex;
    flex-direction: column;
    border: 1px solid #a8c2df;
    border-radius: 3px;
    background: linear-gradient(#dfe9f5, #d5e1f1 18%, #c9d9ee 20%, #d9e8f7 70%);
    box-shadow: 1px 1px 0 #eef6ff;
}

.group-body {
    height: 92px;
    display: flex;
    padding: 1px 4px;
}

.group-label {
    flex: 1;
    position: relative;
    background: #c1d9f1;
    text-align: center;
    color: #3e6aaa;
}

.with-launcher {
    padding-right: 20px;
}

.launcher {
    position: absolute;
    right: 5px;
    top: 4px;
}

.group-cut { width: 9px; border-left: none; }
.group-slides { width: 139px; }
.group-font { width: 263px; }
.group-para { width: 341px; }
.group-draw { width: 393px; }
.group-edit { width: 79px; }

.tall {
    width: 56px;
    padding-top: 7px;
    display: flex;
    flex-direction: column;
    align-items: center;
    white-space: nowrap;
}

.tall svg {
    margin-bottom: 7px;
}

.tall > .arrow {
    margin-top: 8px;
}

.group-slides .tall {
    width: 58px;
}

.tall.quick-style {
    width: 64px;
}

.tall .line .arrow {
    margin: 0 0 3px 5px;
}

.stack {
    display: flex;
    flex-direction: column;
    margin-left: 5px;
}

.stack button {
    height: 26px;
    display: flex;
    align-items: center;
    gap: 5px;
    white-space: nowrap;
}

.stack.tight {
    margin-left: 0;
}

.stack.tight button {
    gap: 3px;
}

.off,
.tall:disabled {
    color: #8d9aad;
}

.rows {
    display: flex;
    flex-direction: column;
    gap: 15px;
    padding-top: 12px;
}

.rows.group-body {
    padding-top: 13px;
}

.tool-row {
    display: flex;
    gap: 4px;
    height: 26px;
}

.combo-pair {
    display: flex;
    height: 30px;
}

.combo-pair select {
    width: 49px;
    border: 1px solid #b8bfca;
    background: #f0eef1;
    color: #96989c;
    font-size: 16px;
}

.combo-pair select:first-child {
    width: 116px;
    border-right: none;
}

.box {
    display: flex;
    border: 1px solid #93b1da;
    border-radius: 3px;
    color: #64799b;
}

.box button {
    flex: 1;
    display: flex;
    align-items: center;
    justify-content: center;
    gap: 4px;
    border-right: 1px solid #c3d4ec;
}

.box button:last-child {
    border-right: none;
}

.box .arrow {
    color: #9dacc4;
}

.two { width: 53px; }
.one { width: 28px; }
.seven { width: 210px; }
.color { width: 38px; }
.p1 { width: 76px; }
.p2 { width: 53px; }
.p3 { width: 36px; }
.p4 { width: 137px; }

.serif {
    font-family: "Liberation Serif", serif;
    font-size: 16px;
    font-weight: 700;
}

.box .serif {
    gap: 2px;
}

.serif.small {
    font-size: 13px;
}

.serif sup {
    font-size: 8px;
    align-self: flex-start;
}

.font-color span {
    height: 23px;
    padding: 0 3px;
    border-bottom: 5px solid #9e9fa3;
    line-height: 18px;
}

.gallery {
    display: flex;
    height: 75px;
    margin-top: 3px;
    border: 1px solid #b3cbe8;
    background: #dcebfb;
}

.gallery-scroll {
    width: 16px;
    display: flex;
    flex-direction: column;
}

.gallery-scroll button {
    flex: 1;
    border: 1px solid #b3cbe8;
    background: #d3e3f7;
    line-height: 10px;
}

.gallery-scroll button:disabled {
    background: #eeeff2;
    color: #999;
}

.arrow.more {
    box-shadow: 0 -6px 0 -4px #15428b;
}

.workspace {
    flex: 1;
    min-height: 0;
    display: flex;
}

.slides-panel {
    width: 340px;
    border-right: 1px solid #6f95ca;
    background: #b4d0f5;
    padding-right: 5px;
    display: flex;
    flex-direction: column;
}

.panel-head {
    height: 28px;
    padding: 3px 7px 0 0;
    text-align: right;
    background: linear-gradient(#c9dcf8, #a9c7ef);
    border-bottom: 1px solid #7b9fd2;
    color: #3a6299;
}

.panel-head button svg {
    stroke-width: 2;
    vertical-align: middle;
}

.panel-body {
    flex: 1;
    min-height: 0;
    display: flex;
    background: linear-gradient(#a0bfe9, #80a1d0 28%, #5b83b8 65%, #628bc8 80%);
}

.thumbs {
    flex: 1;
    min-width: 0;
    display: flex;
    flex-direction: column;
    gap: 20px;
    padding: 12px 11px 0 0;
    overflow: hidden;
}

.thumb {
    flex: none;
    height: 228px;
    padding: 12px 0;
    background: #fff;
    box-shadow: 1px 1px 3px #2c3f5c;
    white-space: nowrap;
}

.thumb.selected {
    box-shadow: 0 0 0 1px #555, 0 0 0 8px #efa750;
}

.cover {
    display: flex;
    flex-direction: column;
    align-items: flex-end;
    padding-right: 53px;
}

.cover h2 {
    margin-top: 35px;
    font-size: 24px;
    line-height: 30px;
    font-weight: 700;
    color: #d01515;
}

.cover h2.large {
    margin-top: 37px;
    font-size: 28px;
}

.cover h3 {
    margin-top: 52px;
    padding-right: 90px;
    font-size: 23px;
    line-height: 26px;
    font-weight: 700;
    color: #68318f;
}

.text h2 {
    margin-left: -6px;
    font-size: 17px;
    line-height: 26px;
    color: #d01b22;
}

.kai p {
    margin: 0 0 3px -5px;
    font-size: 10px;
    line-height: 13px;
    font-weight: 700;
    color: #222;
}

.kai h2 {
    margin-bottom: 8px;
}

.kai .gap {
    margin-top: 16px;
}

.kai address {
    margin: 3px 29px 0 0;
    float: right;
    text-align: center;
    font-size: 8px;
    line-height: 9px;
    font-style: normal;
    font-weight: 700;
    color: #7b6a1e;
}

.plain {
    padding-top: 22px;
}

.plain p {
    margin: 13px 0 20px -9px;
    font-size: 12px;
    line-height: 12px;
    color: #444;
}

.plain .far {
    margin-top: 31px;
}

.versions {
    padding-top: 22px;
}

.versions table {
    margin: 11px 0 0 -2px;
    border-collapse: collapse;
    table-layout: fixed;
    width: 253px;
    font-size: 8px;
    line-height: 14px;
    text-align: center;
}

.versions caption {
    padding: 0 74px 10px 0;
    color: #444;
}

.versions th,
.versions td {
    height: 15px;
    border: 1px solid #222;
}

.versions th:first-child {
    width: 24px;
}

.versions th:nth-child(2) {
    width: 51px;
}

.versions td,
.versions .hot {
    color: #cc2222;
}

.versions .no {
    font-size: 11px;
    font-weight: 700;
    color: #111;
}

.office-scroll {
    width: 19px;
    display: flex;
    flex-direction: column;
    align-items: center;
    padding: 10px 0 5px;
    background: #7797c5;
    border-left: 3px solid #89a7d6;
    color: #34527f;
}

.office-scroll > .arrow {
    border-left-width: 5px;
    border-right-width: 5px;
}

.office-scroll > .arrow:last-child {
    margin-top: auto;
}

.office-thumb {
    width: 18px;
    height: 184px;
    margin-top: 7px;
    display: flex;
    border: 1px solid #49648f;
    background: linear-gradient(90deg, #eef3fa, #dfe7f2 50%, #b9c8dd);
}

.office-thumb::after {
    content: "";
    width: 8px;
    height: 9px;
    margin: auto;
    background: repeating-linear-gradient(#60789e 0 1px, transparent 1px 3px);
}

.editor {
    flex: 1;
    min-width: 0;
    display: flex;
    flex-direction: column;
}

.canvas {
    flex: 1;
    display: flex;
    padding: 63px 48px 62px 156px;
    background: linear-gradient(#a2c0e9, #8aabda 20%, #7498c9 50%, #628ac2);
}

.slide {
    flex: 1;
    display: flex;
    flex-direction: column;
    align-items: flex-end;
    justify-content: space-between;
    padding: 203px 40px 33px 0;
    background: #fff;
    box-shadow: 2px 2px 6px #2f4364;
}

.slide h2 {
    padding-right: 206px;
    white-space: nowrap;
    font-size: 118px;
    line-height: 140px;
    font-weight: 700;
    color: #f00;
}

.page-no {
    font-size: 21px;
    line-height: 24px;
    color: #999;
}

.notes {
    height: 67px;
    padding: 10px 13px;
    border-top: 6px solid #b0cbf3;
    background: #fff;
    font-family: "Liberation Serif", "Noto Sans CJK SC", serif;
    font-size: 18px;
    line-height: 22px;
}

.statusbar {
    height: 27px;
    display: flex;
    align-items: center;
    padding-bottom: 1px;
    border-top: 1px solid #6585ae;
    background: linear-gradient(#e1ecfb, #cde0f8 35%, #b2cef3 40%, #d5e5fa);
    color: #1d3a78;
}

.theme {
    width: 97px;
    margin-right: 8px;
    text-indent: -6px;
    border-right: 1px solid #9ab7df;
    white-space: nowrap;
    overflow: hidden;
}

.lang {
    padding: 0 9px 0 17px;
    border-right: 1px solid #9ab7df;
    white-space: nowrap;
}

.zoom-area {
    align-self: stretch;
    width: 208px;
    margin-left: auto;
    padding-left: 7px;
    display: flex;
    align-items: center;
    gap: 9px;
    border-left: 1px solid #7e9ecb;
    background: linear-gradient(#b9d2f5, #8fb2e6 40%, #7fa4dc);
}

.views {
    display: flex;
    border: 1px solid #6f8fbd;
    background: #c7daf4;
}

.views button {
    width: 23px;
    height: 23px;
    line-height: 14px;
    border-right: 1px solid #a5bddf;
}

.views .on {
    background: #fad878;
}

.zoom-out {
    width: 20px;
    height: 20px;
    padding: 4px;
    border: 1px solid #53709d;
    border-radius: 50%;
    background: linear-gradient(#fff, #c4d3e8);
}

.zoom-out::after {
    content: "";
    display: block;
    height: 2px;
    background: #445878;
}

.zoom-line {
    flex: 1;
    height: 2px;
    margin-left: -9px;
    background: #dfeafa;
}

/* Windows on the desktop */
.window {
    position: absolute;
    display: flex;
    flex-direction: column;
    border: 1px solid #8c9199;
    background: #fff;
    box-shadow: 0 4px 14px rgba(0, 0, 0, 0.35);
}

.win-title {
    flex: none;
    display: flex;
    align-items: center;
    padding-bottom: 2px;
    background: #fff;
}

.win-buttons {
    display: flex;
    margin-left: auto;
    color: #777;
}

.win-buttons button {
    width: 59px;
    line-height: 12px;
}

.caption {
    color: #999;
}

.console {
    left: 1400px;
    top: 636px;
    width: 757px;
    height: 638px;
}

.console .win-title {
    height: 37px;
}

.console-body {
    flex: 1;
    display: flex;
}

.console-screen {
    flex: 1;
    background: #0c0a0e;
}

.console-scroll {
    width: 21px;
    display: flex;
    flex-direction: column;
    align-items: center;
    justify-content: space-between;
    padding: 7px 1px;
    background: #f0f0f0;
    color: #555;
}

.console-scroll i {
    width: 100%;
    height: 22px;
    margin: 7px 0 auto;
    background: #cdcdcd;
}

.explorer {
    --tabs-width: 266px;
    left: 532px;
    top: 233px;
    width: 1208px;
    height: 1099px;
}

.explorer .win-title {
    height: 37px;
    padding-bottom: 0;
}

.explorer .win-title > :not(.context) {
    padding-bottom: 2px;
}

.quick {
    width: var(--tabs-width);
    display: flex;
    align-items: center;
    gap: 9px;
    padding-left: 9px;
}

.quick .bar {
    width: 1px;
    height: 16px;
    margin-right: 4px;
    background: #888;
}

.context {
    width: 126px;
    height: 33px;
    align-self: flex-end;
    line-height: 33px;
    text-align: center;
    background: #e8ccfa;
}

.explorer .caption {
    margin-left: 13px;
}

.ex-tabs {
    height: 32px;
    display: flex;
    border-bottom: 1px solid #dadbdc;
}

.main-tabs {
    width: var(--tabs-width);
    display: flex;
}

.main-tabs button {
    width: 65px;
    padding-bottom: 2px;
}

.main-tabs .file {
    width: 71px;
    height: 28px;
    padding: 0;
    background: #0668b3;
    color: #fff;
}

.main-tabs .home {
    width: 63px;
    height: 32px;
    border: 1px solid #dadbdc;
    border-bottom: none;
    background: #f5f7f9;
}

.tools {
    width: 126px;
    padding-bottom: 2px;
    border: 1px solid #e3dce8;
    border-width: 0 1px;
}

.tab-right {
    margin-left: auto;
    display: flex;
    align-items: center;
    gap: 10px;
    padding-right: 4px;
    color: #999;
}

.help {
    width: 19px;
    height: 19px;
    border-radius: 50%;
    background: #0a64b0;
    color: #fff;
    font-weight: 700;
    line-height: 18px;
}

.ex-ribbon {
    height: 124px;
    display: flex;
    padding: 1px 0 3px;
    border-bottom: 1px solid #dadbdc;
    background: #f6f8fa;
}

.ex-group {
    display: flex;
    flex-direction: column;
    border-right: 1px solid #dfe2e6;
}

.clip { width: 300px; }
.org { width: 220px; }
.new { width: 163px; }
.open { width: 152px; }
.pick { width: 102px; }

.ex-tools {
    flex: 1;
    display: flex;
    padding: 3px 4px;
}

.big {
    width: 50px;
    padding-top: 4px;
    display: flex;
    flex-direction: column;
    align-items: center;
    white-space: nowrap;
    text-align: center;
}

.big svg {
    margin-bottom: 4px;
}

.big.wide {
    width: 68px;
}

.ex-ribbon .arrow {
    border-width: 4px 4px 0;
}

.ex-ribbon button:disabled {
    color: #838589;
}

.split {
    width: 1px;
    height: 54px;
    margin: 18px 3px 0;
    background: #dfe2e6;
}

.small-list {
    margin-left: 4px;
}

.small-list button {
    height: 26px;
    display: flex;
    align-items: center;
    gap: 4px;
    white-space: nowrap;
}

.small-list.roomy button {
    height: 29px;
}

.ex-label {
    line-height: 22px;
    text-align: center;
    color: #555;
}

.address-row {
    height: 50px;
    display: flex;
    padding: 4px 12px 8px 16px;
}

.history {
    width: 118px;
    display: flex;
    align-items: center;
    gap: 20px;
    color: #666;
}

.history svg:nth-child(3) {
    margin-right: -4px;
}

.address {
    flex: 1;
    display: flex;
    align-items: center;
    gap: 9px;
    padding-left: 2px;
    border: 1px solid #d5d9dc;
}

.address a {
    color: #111;
    text-decoration: none;
}

.drop {
    margin-left: auto;
    color: #666;
}

.refresh {
    width: 40px;
    align-self: stretch;
    border-left: 1px solid #d5d9dc;
}

.refresh svg {
    vertical-align: middle;
}

.search {
    width: 206px;
    margin-left: 12px;
    display: flex;
    align-items: center;
    padding-right: 11px;
    border: 1px solid #d5d9dc;
}

.search input {
    flex: 1;
    min-width: 0;
}

.ex-main {
    flex: 1;
    min-height: 0;
    display: flex;
}

.tree {
    width: 195px;
    padding-top: 20px;
}

.tree a {
    height: 30px;
    display: flex;
    align-items: center;
    gap: 6px;
    padding-left: 41px;
    white-space: nowrap;
}

.tree .top {
    padding-left: 31px;
    gap: 5px;
}

.tree .top:not(:first-child) {
    margin-top: 10px;
}

.tree .active,
.files .active {
    background: #dcdadc;
}

.pin {
    margin: 0 4px 0 auto;
}

.files {
    flex: 1;
    margin-left: 2px;
    padding-left: 20px;
    border-left: 1px solid #f3f3f3;
}

.files-head {
    padding-left: 3px;
    line-height: 30px;
    margin-bottom: 10px;
    color: #4c607a;
}

.files ul {
    width: 700px;
    list-style: none;
}

.files li {
    height: 27px;
    display: flex;
    align-items: center;
    gap: 5px;
    padding-left: 5px;
}

.ex-status {
    height: 31px;
    display: flex;
    align-items: center;
    gap: 12px;
    padding: 0 10px 2px 17px;
    color: #33475e;
}

.ex-status i {
    width: 1px;
    height: 14px;
    background: #e4e4e4;
}

.view-switch {
    display: flex;
    gap: 5px;
    margin-left: auto;
}

.view-switch button {
    height: 29px;
    width: 18px;
}

.view-switch svg {
    vertical-align: middle;
}

.view-switch .on {
    width: 28px;
    border: 1px solid #4597ae;
    background: #cdeaf5;
}

.unzip {
    left: 799px;
    top: 482px;
    width: 707px;
    background: #f0f0f0;
}

.unzip .win-title {
    height: 31px;
    gap: 5px;
    padding-left: 4px;
}

.unzip-body {
    padding: 13px 15px 17px;
}

.unzip-body dl {
    display: grid;
    grid-template-columns: 1fr 1fr;
    grid-auto-rows: 23px;
    line-height: 23px;
}

.unzip-body dd {
    text-align: right;
    font-family: "Liberation Sans", sans-serif;
    font-size: 14px;
}

.progress {
    height: 31px;
    margin: 97px 0 131px;
    border: 1px solid #999;
    border-right-color: #fff;
    border-bottom-color: #fff;
}

.actions {
    display: flex;
    justify-content: flex-end;
    gap: 15px;
}

.actions button,
.choices button {
    height: 33px;
    border: 1px solid #fff;
    border-right: 2px solid #868686;
    border-bottom: 2px solid #868686;
    background: #f0f0f0;
    font-family: "Liberation Sans", "Noto Sans CJK SC", sans-serif;
}

.actions button {
    width: 150px;
}

.confirm {
    left: 881px;
    top: 513px;
    width: 540px;
    border-color: #555;
    background: #f0f0f0;
    box-shadow: 0 6px 18px rgba(0, 0, 0, 0.45);
}

.confirm .win-title {
    height: 32px;
    padding-left: 4px;
}

.confirm .win-buttons {
    margin-right: -8px;
    color: #111;
}

.confirm-body {
    padding: 11px 11px 0;
}

.confirm-body .ask {
    margin: 10px 11px 5px;
}

.confirm-body .with {
    margin: 18px 11px 8px;
}

.file-info {
    display: flex;
    gap: 15px;
    padding-left: 18px;
    font-family: "Liberation Sans", "Noto Sans CJK SC", sans-serif;
    font-size: 14px;
    line-height: 16px;
}

.file-info svg {
    margin-top: 14px;
}

.file-info.second svg {
    margin-top: 4px;
}

.choices {
    display: grid;
    grid-template-columns: 97px 97px 97px;
    gap: 2px 38px;
    margin: 20px 0 0 79px;
}

.choices .default {
    border-color: #777;
    border-left-width: 2px;
    border-right-width: 3px;
    border-bottom-width: 3px;
}

.cursor {
    position: absolute;
    left: 1093px;
    top: 753px;
}

.meeting-pill {
    position: absolute;
    left: 1079px;
    top: 0;
    width: 146px;
    height: 26px;
    display: flex;
    align-items: center;
    gap: 6px;
    padding-left: 8px;
    border-radius: 0 0 4px 4px;
    background: rgba(75, 75, 75, 0.75);
    color: #c4c4c4;
}

.speaking {
    position: absolute;
    right: 0;
    top: 83px;
    width: 210px;
    height: 45px;
    display: flex;
    align-items: center;
    padding-left: 16px;
    background: #25282d;
    color: #fff;
    font-size: 15px;
}

.speaking i {
    width: 1px;
    height: 20px;
    margin: 0 10px 0 15px;
    background: #41444a;
}

.taskbar {
    position: relative;
    height: 50px;
    display: flex;
    background: linear-gradient(90deg, #21343e, #20333f 60%, #1b2943 90%);
    color: #fff;
}

.calc {
    margin: 10px 21px 0 36px;
}

.task {
    width: 201px;
    display: flex;
    align-items: center;
    gap: 6px;
    padding-left: 14px;
    white-space: nowrap;
    background: linear-gradient(#76b9ed, #76b9ed) 6px 100% / 190px 3px no-repeat;
}

.task.active {
    background: linear-gradient(#76b9ed, #76b9ed) 0 100% / 100% 3px no-repeat #4a5c68;
}

.tray {
    margin-left: auto;
    display: flex;
    align-items: center;
    width: 201px;
}

.mic {
    margin: 0 72px 0 15px;
}

.volume {
    margin-right: 7px;
}

.ime {
    font-size: 20px;
}

.clock {
    width: 18px;
    margin-left: auto;
    text-align: right;
    line-height: 23px;
    white-space: nowrap;
}
```
